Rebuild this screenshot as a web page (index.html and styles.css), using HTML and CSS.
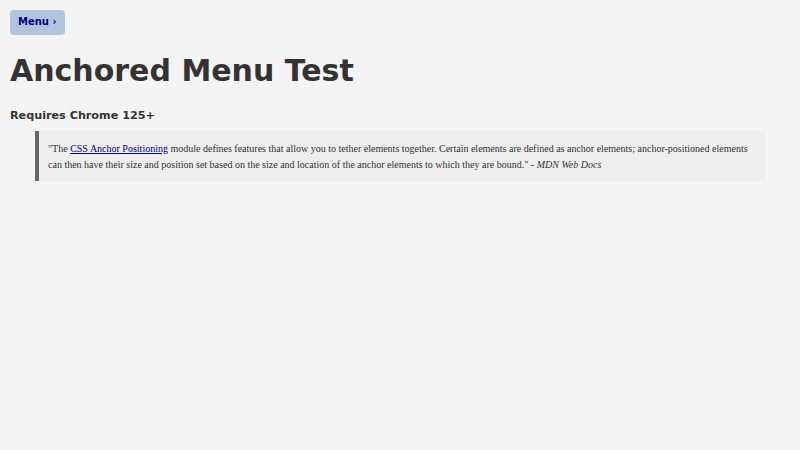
FILE: index.html
```html
<!DOCTYPE html>
<html>
<head>
<meta charset="utf-8">
<link rel="stylesheet" href="styles.css">
</head>
<body>
<button class="menu-btn">Menu ›</button>
<h1 class="title">Anchored Menu Test</h1>
<h3 class="subtitle">Requires Chrome 125+</h3>
<blockquote class="quote">"The <a href="#">CSS Anchor Positioning</a> module defines features that allow you to tether elements together. Certain elements are defined as anchor elements; anchor-positioned elements can then have their size and position set based on the size and location of the anchor elements to which they are bound." - <em>MDN Web Docs</em></blockquote>
</body>
</html>
```
FILE: styles.css
```css
html, body {
  background: #f4f4f4;
}
body {
  margin: 10px;
  font-family: "DejaVu Sans", sans-serif;
  color: #333;
}
.menu-btn {
  display: block;
  font-family: "DejaVu Sans", sans-serif;
  font-weight: bold;
  font-size: 10px;
  color: #000080;
  background: #b0c4de;
  border: none;
  border-radius: 4px;
  height: 25px;
  padding: 0 8px 3px;
  margin: 0;
}
.title {
  font-size: 30px;
  margin: 18px 0 0;
  line-height: 36px;
}
.subtitle {
  font-size: 11.2px;
  margin: 20px 0 0;
  line-height: 14px;
}
.quote {
  margin: 8px 25px 0;
  background: #eee;
  border-left: 4px solid #666;
  padding: 10px 9px 8px;
  font-family: "Liberation Serif", serif;
  font-size: 10px;
  line-height: 16px;
}
.quote a {
  color: #00008b;
}
```
